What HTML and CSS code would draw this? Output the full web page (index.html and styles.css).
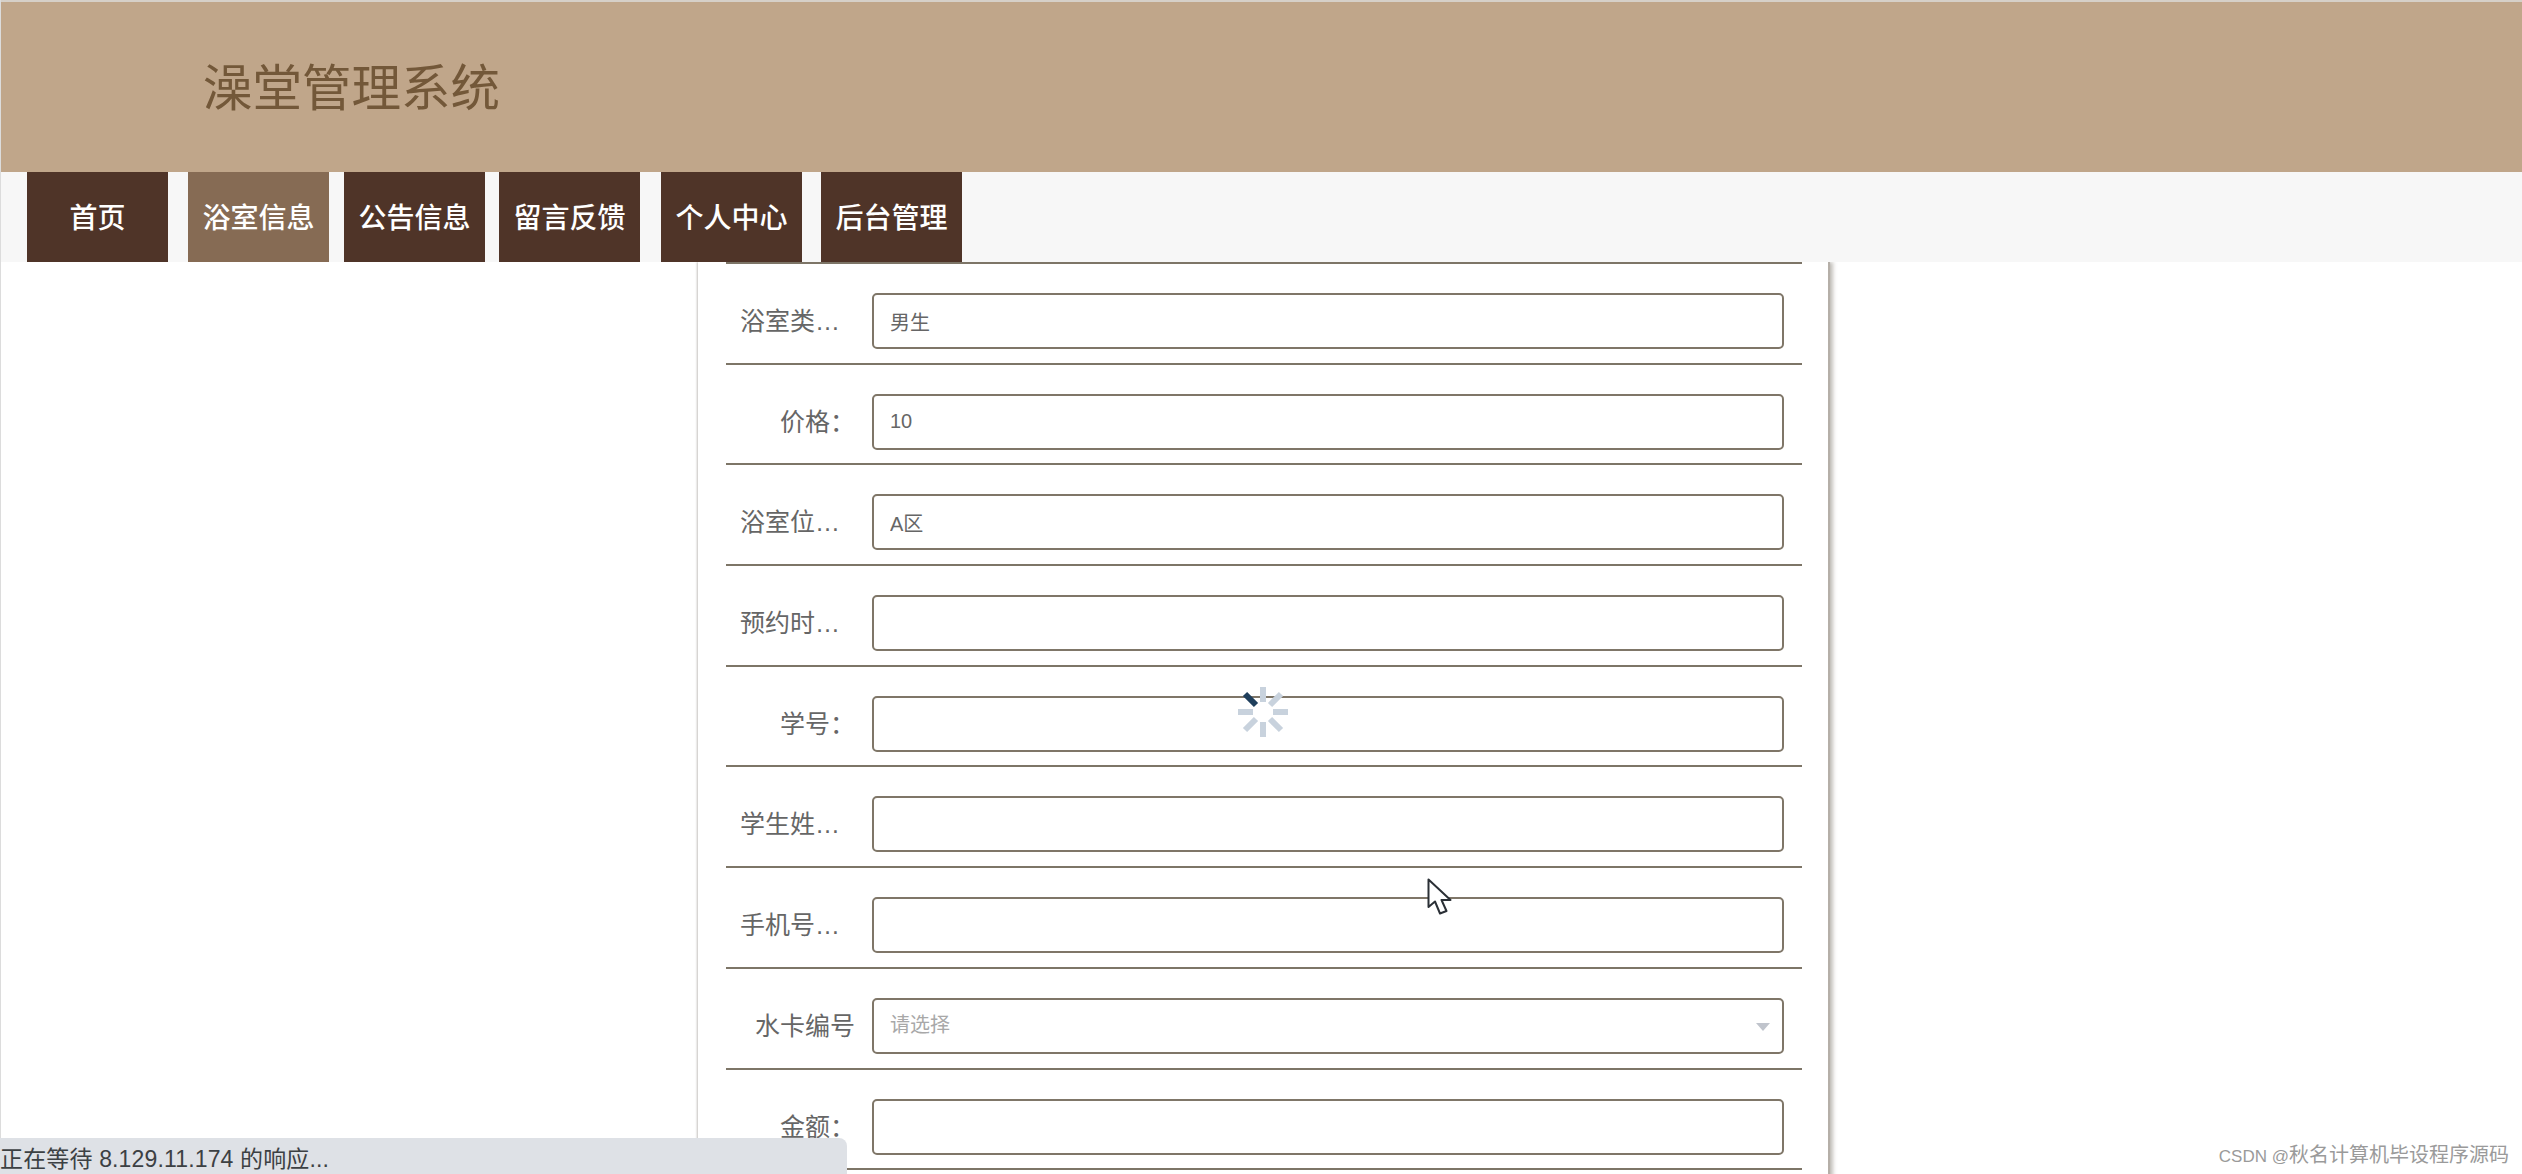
FILE: index.html
```html
<!DOCTYPE html>
<html lang="zh-CN">
<head>
<meta charset="utf-8">
<title>澡堂管理系统</title>
<link rel="stylesheet" href="styles.css">
</head>
<body>
<div class="page">
  <header class="header"><h1 class="title">澡堂管理系统</h1></header>
  <nav class="nav">
    <a class="nav-item">首页</a>
    <a class="nav-item active">浴室信息</a>
    <a class="nav-item">公告信息</a>
    <a class="nav-item">留言反馈</a>
    <a class="nav-item">个人中心</a>
    <a class="nav-item">后台管理</a>
  </nav>
  <main class="card">
    <form class="form">
      <div class="row"><label class="label">浴室类型：</label><input class="field" value="男生" readonly></div>
      <div class="row"><label class="label">价格：</label><input class="field" value="10" readonly></div>
      <div class="row"><label class="label">浴室位置：</label><input class="field" value="A区" readonly></div>
      <div class="row"><label class="label">预约时间：</label><input class="field" readonly></div>
      <div class="row"><label class="label">学号：</label><input class="field" readonly></div>
      <div class="row"><label class="label">学生姓名：</label><input class="field" readonly></div>
      <div class="row"><label class="label">手机号码：</label><input class="field" readonly></div>
      <div class="row"><label class="label">水卡编号</label>
        <div class="select"><input class="field" placeholder="请选择" readonly><span class="caret"></span></div>
      </div>
      <div class="row"><label class="label">金额：</label><input class="field" readonly></div>
    </form>
  </main>
</div>

<svg class="spinner" width="56" height="56" viewBox="-28 -28 56 56" aria-hidden="true">
  <g stroke="#c8d2dd" stroke-width="6">
    <line x1="0" y1="-25" x2="0" y2="-10"/>
    <line x1="18" y1="-18" x2="7" y2="-7"/>
    <line x1="25" y1="0" x2="10" y2="0"/>
    <line x1="18" y1="18" x2="7" y2="7"/>
    <line x1="0" y1="25" x2="0" y2="10"/>
    <line x1="-18" y1="18" x2="-7" y2="7"/>
    <line x1="-25" y1="0" x2="-10" y2="0"/>
    <line x1="-18" y1="-18" x2="-7" y2="-7" stroke="#1f3f5c"/>
  </g>
</svg>

<svg class="cursor" width="26" height="38" viewBox="0 0 26 38" aria-hidden="true">
  <path d="M1.5 1.5 V29 L8 23.5 L13 35.5 L19.5 33 L14.5 22 H23.5 Z" fill="#fff" stroke="#2b3036" stroke-width="2" stroke-linejoin="round"/>
</svg>

<div class="status">正在等待 8.129.11.174 的响应...</div>
<div class="watermark"><span class="watermark-handle">CSDN @</span>秋名计算机毕设程序源码</div>
</body>
</html>
```

FILE: styles.css
```css
* { box-sizing: border-box; }

html, body {
  margin: 0;
  height: 1174px;
  overflow: hidden;
  background: #fff;
}

body {
  font-family: "Liberation Sans", "Noto Sans CJK SC", sans-serif;
  position: relative;
}

.page {
  height: 1174px;
  overflow: hidden;
  border-left: 1px solid #dcdcdc;
}

.header {
  height: 172px;
  background: #c0a68a;
  border-top: 2px solid #d6d0c8;
  display: flex;
  align-items: center;
  padding: 4px 0 0 202px;
}

.title {
  margin: 0;
  font-size: 49.5px;
  font-weight: 400;
  color: #735839;
  line-height: 1;
}

.nav {
  height: 90px;
  background: #f7f7f7;
  display: flex;
  padding-left: 26px;
  position: relative;
  z-index: 1;
}

.nav-item {
  width: 141px;
  height: 90px;
  padding-bottom: 2px;
  background: #4f3428;
  color: #fff;
  font-size: 28px;
  font-weight: 500;
  display: flex;
  align-items: center;
  justify-content: center;
}

.nav-item.active { background: #866b54; }
.nav-item:nth-child(2) { margin-left: 20px; }
.nav-item:nth-child(3) { margin-left: 15px; }
.nav-item:nth-child(4) { margin-left: 14px; }
.nav-item:nth-child(5) { margin-left: 21px; }
.nav-item:nth-child(6) { margin-left: 19px; }

.card {
  width: 1132px;
  height: 920px;
  margin-left: 697px;
  padding: 0 26px 0 28px;
  background: #fff;
  border-right: 2px solid #b5afa8;
  box-shadow: 3px 0 4px rgba(120, 112, 102, .45), -1px 0 2px rgba(120, 112, 102, .4);
}

.form {
  border-top: 2px solid #7d7567;
}

.row {
  height: 100.7px;
  display: flex;
  align-items: flex-start;
  padding: 29px 18px 0 0;
  border-bottom: 2px solid #7d7567;
}

.label {
  width: 115px;
  margin-left: 14px;
  margin-right: 17px;
  line-height: 56px;
  font-size: 25px;
  color: #666;
  text-align: right;
  white-space: nowrap;
  overflow: hidden;
  text-overflow: ellipsis;
  flex: none;
}

.field {
  flex: 1;
  width: 100%;
  height: 56px;
  padding: 0 16px;
  font: inherit;
  font-size: 20px;
  color: #666;
  background: #fff;
  border: 2px solid #7f7668;
  border-radius: 5px;
  outline: none;
}

.field::placeholder { color: #a8a8a8; opacity: 1; }

.select {
  flex: 1;
  position: relative;
  display: flex;
}

.caret {
  position: absolute;
  right: 14px;
  top: 25px;
  width: 0;
  height: 0;
  border-left: 7px solid transparent;
  border-right: 7px solid transparent;
  border-top: 8px solid #c0c4cc;
}

.spinner {
  position: absolute;
  left: 1235px;
  top: 684px;
}

.cursor {
  position: absolute;
  left: 1427px;
  top: 878px;
}

.status {
  position: absolute;
  left: 0;
  bottom: 0;
  width: 847px;
  height: 36px;
  padding-top: 5px;
  background: #dee1e6;
  border-top-right-radius: 8px;
  font-size: 23px;
  letter-spacing: .15px;
  line-height: 32px;
  color: #3c4043;
  white-space: nowrap;
}

.watermark {
  position: absolute;
  right: 13px;
  top: 1143px;
  font-size: 20px;
  line-height: 24px;
  color: #9a9a9a;
  white-space: nowrap;
}

.watermark-handle { font-size: 17px; }
```
